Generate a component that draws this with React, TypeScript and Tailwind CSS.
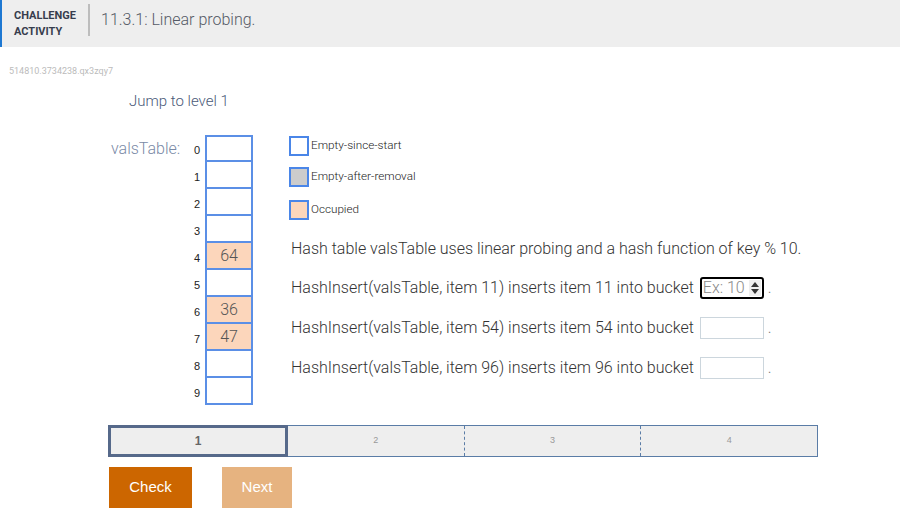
import React from 'react';

const cells: (string | null)[] = [null, null, null, null, '64', null, '36', '47', null, null];

const inserts = [
  { item: 11, focused: true },
  { item: 54, focused: false },
  { item: 96, focused: false },
];

const Legend = ({ fill, label }: { fill: string; label: string }) => (
  <div className="flex items-center h-[20px]">
    <div className={`w-[20px] h-[20px] border-2 border-[#4a86e8] ${fill}`} />
    <span className="ml-[2px] text-[11.7px] font-light text-[#222]">{label}</span>
  </div>
);

const App = () => {
  return (
    <div className="w-[900px] h-[530px] bg-white overflow-hidden font-['Roboto',sans-serif]">
      {/* header */}
      <div className="h-[47px] bg-[#eeeeee] border-l-2 border-[#1e78d2] flex items-center">
        <div className="pl-[12px] text-[11px] font-bold leading-[16px] text-[#373d4d] w-[86px]">
          CHALLENGE
          <br />
          ACTIVITY
        </div>
        <div className="w-[2px] h-[32px] bg-[#bdbdbd] mb-[8px]" />
        <div className="ml-[11px] mb-[7px] text-[16px] font-light text-[#555a66]">11.3.1: Linear probing.</div>
      </div>

      <div className="pl-[9px] mt-[19px] text-[9px] text-[#bbbbbb] leading-[10px]">514810.3734238.qx3zqy7</div>

      <div className="pl-[129px] mt-[15px] text-[15px] font-light text-[#4a5a78] leading-[20px]">Jump to level 1</div>

      <div className="flex mt-[24px]">
        {/* table */}
        <div className="flex pl-[111px]">
          <div className="text-[16px] font-light text-[#7a8aa6] mt-[2px] w-[78px]">valsTable:</div>
          <div className="flex flex-col">
            {cells.map((v, i) => (
              <div key={i} className="flex items-center h-[27px]">
                <span className="w-[16px] pr-[5px] text-right text-[11px] text-[#222] font-['Liberation_Sans',sans-serif] mt-[3px]">
                  {i}
                </span>
                <div
                  className={`w-[48px] h-[27px] border-2 border-[#5b8fe6] ${i > 0 ? '-mt-[2px] h-[29px]' : ''} flex items-center justify-center text-[16px] font-light text-[#555] ${v ? 'bg-[#fcd6bb]' : 'bg-white'}`}
                >
                  {v}
                </div>
              </div>
            ))}
          </div>
        </div>

        {/* right side */}
        <div className="ml-[36px] pt-[1px]">
          <div className="flex flex-col gap-[11px]">
            <Legend fill="bg-white" label="Empty-since-start" />
            <div className="h-[2px]" />
          </div>
          <div className="-mt-[2px] flex flex-col gap-[13px]">
            <Legend fill="bg-[#cccccc]" label="Empty-after-removal" />
            <Legend fill="bg-[#fcd6bb]" label="Occupied" />
          </div>
          <div className="mt-[19px] ml-[2px] text-[16px] font-light text-[#333] leading-[20px]">
            Hash table valsTable uses linear probing and a hash function of key % 10.
          </div>
          <div className="mt-[18px] ml-[2px] flex flex-col gap-[18px]">
            {inserts.map((r) => (
              <div key={r.item} className="flex items-center h-[22px] text-[16px] font-light text-[#333]">
                <span>
                  HashInsert(valsTable, item {r.item}) inserts item {r.item} into bucket
                </span>
                {r.focused ? (
                  <div className="ml-[6px] w-[64px] h-[22px] border-2 border-black rounded-[3px] flex items-center justify-between pl-[1px] pr-[1px]">
                    <span className="text-[16px] text-[#8a8a8a] leading-none">Ex: 10</span>
                    <div className="w-[12px] h-[16px] bg-[#eeeeee] flex flex-col items-center justify-center gap-[2px]">
                      <div className="w-0 h-0 border-l-[4px] border-r-[4px] border-b-[5px] border-l-transparent border-r-transparent border-b-[#333]" />
                      <div className="w-0 h-0 border-l-[4px] border-r-[4px] border-t-[5px] border-l-transparent border-r-transparent border-t-[#333]" />
                    </div>
                  </div>
                ) : (
                  <div className="ml-[6px] w-[64px] h-[22px] border border-[#ccd6dd]" />
                )}
                <span className="ml-[4px] text-[#777]">.</span>
              </div>
            ))}
          </div>
        </div>
      </div>

      {/* progress */}
      <div className="ml-[108px] mt-[20px] w-[710px] h-[32px] border border-[#5a7ca6] bg-[#eeeeee] flex font-['Liberation_Sans',sans-serif]">
        <div className="w-[180px] -ml-px -mt-px h-[32px] border-[3px] border-[#56698a] flex items-center justify-center text-[12px] font-bold text-[#666]">
          1
        </div>
        <div className="flex-1 flex items-center justify-center text-[9px] text-[#999] border-r border-dashed border-[#5a7ca6]">2</div>
        <div className="flex-1 flex items-center justify-center text-[9px] text-[#999] border-r border-dashed border-[#5a7ca6]">3</div>
        <div className="flex-1 flex items-center justify-center text-[9px] text-[#999]">4</div>
      </div>

      <div className="ml-[109px] mt-[10px] flex gap-[30px] font-['Liberation_Sans',sans-serif]">
        <button className="w-[83px] h-[41px] bg-[#cc6600] text-white text-[15px]">Check</button>
        <button className="w-[70px] h-[41px] bg-[#e6b380] text-white text-[15px]">Next</button>
      </div>
    </div>
  );
};

export default App;
